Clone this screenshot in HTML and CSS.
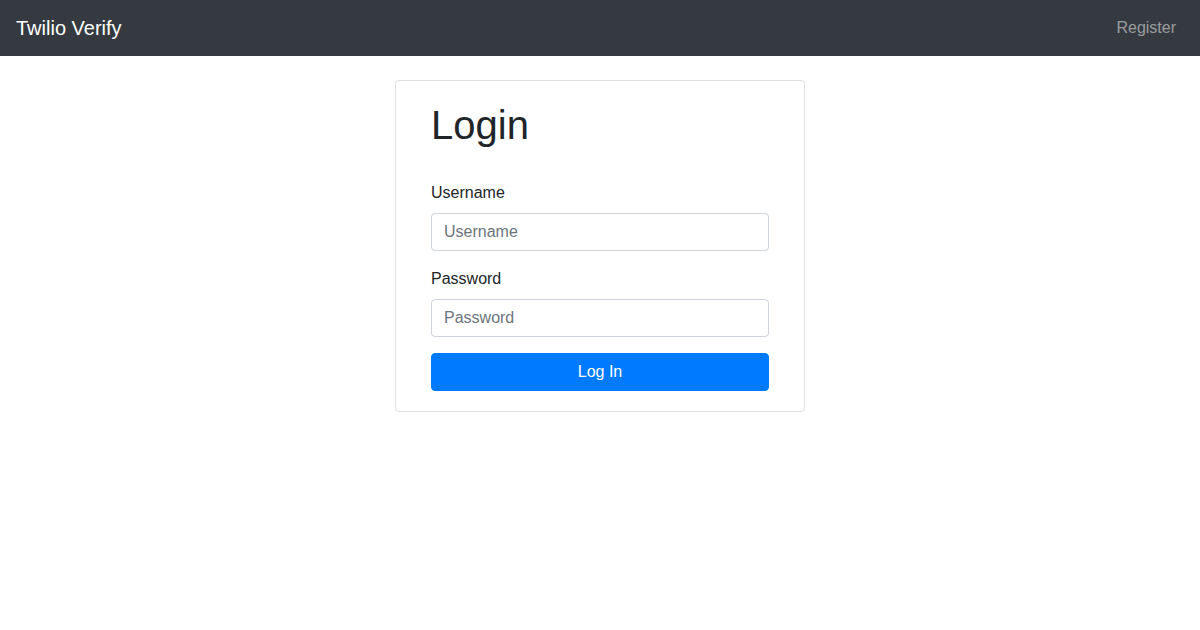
FILE: index.html
```html
<!DOCTYPE html>
<html lang="en">
<head>
<meta charset="utf-8">
<title>Twilio Verify</title>
<link rel="stylesheet" href="styles.css">
</head>
<body>
<nav class="navbar">
  <a class="brand" href="#">Twilio Verify</a>
  <a class="nav-link" href="#">Register</a>
</nav>
<main class="container">
  <div class="card">
    <div class="card-body">
      <h1 class="title">Login</h1>
      <form class="form">
        <div class="form-group">
          <label class="label" for="username">Username</label>
          <input class="input" id="username" type="text" placeholder="Username">
        </div>
        <div class="form-group">
          <label class="label" for="password">Password</label>
          <input class="input" id="password" type="password" placeholder="Password">
        </div>
        <button class="btn" type="button">Log In</button>
      </form>
    </div>
  </div>
</main>
</body>
</html>
```
FILE: styles.css
```css
* { box-sizing: border-box; }
html, body { margin: 0; padding: 0; }
body {
  font-family: "Liberation Sans", Arial, sans-serif;
  font-size: 16px;
  line-height: 1.5;
  color: #212529;
  background: #fff;
}
.navbar {
  display: flex;
  align-items: center;
  justify-content: space-between;
  height: 56px;
  padding: 8px 16px;
  background: #343a40;
}
.brand {
  color: #fff;
  font-size: 20px;
  line-height: 30px;
  padding: 5px 0;
  text-decoration: none;
}
.nav-link {
  color: rgba(255, 255, 255, 0.5);
  text-decoration: none;
  padding: 8px;
}
.container {
  display: flex;
  justify-content: center;
  padding-top: 24px;
}
.card {
  width: 410px;
  border: 1px solid rgba(0, 0, 0, 0.125);
  border-radius: 4px;
}
.card-body {
  padding: 20px 35px;
}
.title {
  margin: 0 0 32px;
  font-size: 40px;
  font-weight: 500;
  line-height: 1.2;
}
.form-group { margin-bottom: 16px; }
.label {
  display: inline-block;
  margin-bottom: 8px;
}
.input {
  display: block;
  width: 100%;
  height: 38px;
  padding: 6px 12px;
  font-family: inherit;
  font-size: 16px;
  line-height: 1.5;
  color: #495057;
  background: #fff;
  border: 1px solid #ced4da;
  border-radius: 4px;
}
.input::placeholder { color: #6c757d; opacity: 1; }
.btn {
  display: block;
  width: 100%;
  height: 38px;
  padding: 6px 12px;
  font-family: inherit;
  font-size: 16px;
  line-height: 1.5;
  color: #fff;
  background: #007bff;
  border: 1px solid #007bff;
  border-radius: 4px;
}
```
